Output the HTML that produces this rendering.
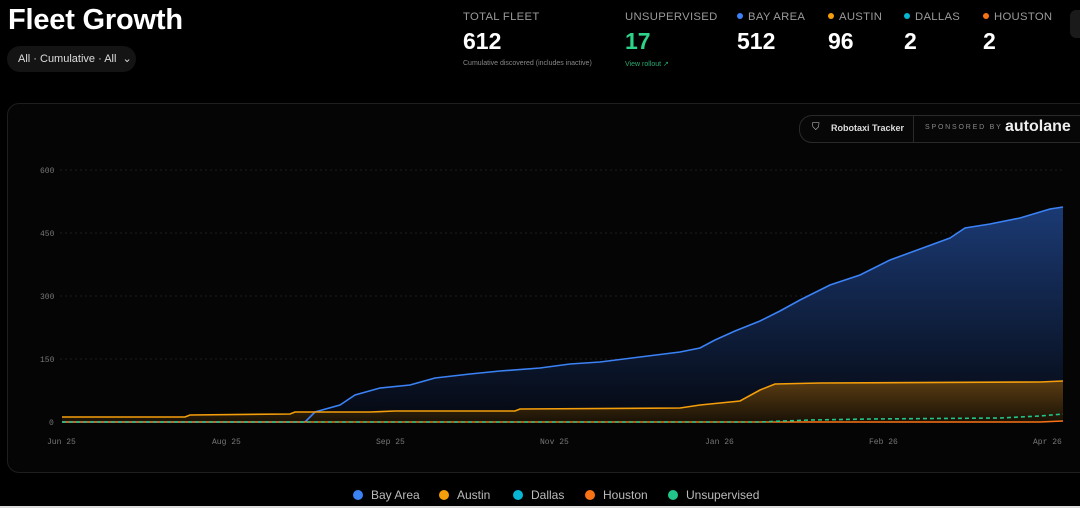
<!DOCTYPE html>
<html><head><meta charset="utf-8"><style>
body{margin:0;width:1080px;height:508px;background:#000;color:#fff;font-family:"Liberation Sans",sans-serif;overflow:hidden;position:relative}
.t{position:absolute;left:8px;top:4px;font-size:29px;font-weight:bold;letter-spacing:-0.2px}
.pill{position:absolute;left:7px;top:46px;width:129px;height:26px;border-radius:13px;background:#141414;font-size:11px;color:#ddd;line-height:26px;padding-left:11px;box-sizing:border-box}
.st{position:absolute;top:11px;font-size:11.3px;color:#9a9a9a;letter-spacing:0.3px}
.sv{position:absolute;top:28px;font-size:23px;font-weight:bold}
.dot{display:inline-block;width:6px;height:6px;border-radius:3px;margin-right:5px;vertical-align:1px}
.card{position:absolute;left:7px;top:103px;width:1090px;height:368px;border:1px solid #1e1e1e;border-radius:12px;background:#050505}
.lg{position:absolute;top:488px;font-size:12px;color:#bbb}
.lg i{display:inline-block;width:10px;height:10px;border-radius:5px;margin-right:8px;vertical-align:-1px}
</style></head><body>
<div class="t">Fleet Growth</div>
<div class="pill">All · Cumulative · All &nbsp;⌄</div>
<div class="st" style="left:463px">TOTAL FLEET</div>
<div class="sv" style="left:463px">612</div>
<div style="position:absolute;left:463px;top:60px;font-size:7px;color:#888">Cumulative discovered (includes inactive)</div>
<div class="st" style="left:625px">UNSUPERVISED</div>
<div class="sv" style="left:625px;color:#2ed38a">17</div>
<div style="position:absolute;left:625px;top:60px;font-size:7px;color:#2aa870">View rollout ↗</div>
<div class="st" style="left:737px"><span class="dot" style="background:#3b82f6"></span>BAY AREA</div>
<div class="sv" style="left:737px">512</div>
<div class="st" style="left:828px"><span class="dot" style="background:#f59e0b"></span>AUSTIN</div>
<div class="sv" style="left:828px">96</div>
<div class="st" style="left:904px"><span class="dot" style="background:#06b6d4"></span>DALLAS</div>
<div class="sv" style="left:904px">2</div>
<div class="st" style="left:983px"><span class="dot" style="background:#f97316"></span>HOUSTON</div>
<div class="sv" style="left:983px">2</div>
<div style="position:absolute;left:1070px;top:10px;width:20px;height:28px;border-radius:6px;background:#1a1a1a"></div>
<div class="card"></div>
<div style="position:absolute;left:799px;top:115px;width:300px;height:26px;border:1px solid #2a2a2a;border-radius:13px;background:#070707"></div>
<div style="position:absolute;left:913px;top:116px;width:1px;height:26px;background:#2a2a2a"></div>
<div style="position:absolute;left:812px;top:122px;font-size:10px;color:#ccc">⛉</div>
<div style="position:absolute;left:831px;top:123px;font-size:9px;color:#ddd;font-weight:bold">Robotaxi Tracker</div>
<div style="position:absolute;left:925px;top:124px;font-size:7px;color:#888;letter-spacing:1.8px">SPONSORED BY</div>
<div style="position:absolute;left:1005px;top:118px;font-size:16px;color:#eee;font-weight:bold">autolane</div>
<svg width="1080" height="508" style="position:absolute;left:0;top:0" font-family="Liberation Mono,monospace" font-size="8" fill="#777">
<defs>
<linearGradient id="b" x1="0" y1="0" x2="0" y2="1"><stop offset="0" stop-color="#1b3a74"/><stop offset="1" stop-color="#050810"/></linearGradient>
<linearGradient id="a" x1="0" y1="0" x2="0" y2="1"><stop offset="0" stop-color="#5a3c12"/><stop offset="1" stop-color="#1a1206"/></linearGradient>
</defs>
<g stroke="#1d1d1d" stroke-dasharray="2 3"><line x1="60" x2="1065" y1="170" y2="170"/><line x1="60" x2="1065" y1="233" y2="233"/><line x1="60" x2="1065" y1="296" y2="296"/><line x1="60" x2="1065" y1="359" y2="359"/></g>
<text x="40" y="173">600</text><text x="40" y="236">450</text><text x="40" y="299">300</text><text x="40" y="362">150</text><text x="49" y="425">0</text>
<text x="47" y="444">Jun 25</text><text x="212" y="444">Aug 25</text><text x="376" y="444">Sep 25</text><text x="540" y="444">Nov 25</text><text x="705" y="444">Jan 26</text><text x="869" y="444">Feb 26</text><text x="1033" y="444">Apr 26</text>
<path d="M305,422 L315,412 L340,405 L355,395 L380,388 L410,385 L435,378 L470,374 L500,371 L540,368 L570,364 L600,362 L640,357 L680,352 L700,348 L715,340 L735,331 L760,321 L780,311 L800,300 L830,285 L860,275 L890,260 L920,249 L950,238 L965,228 L990,224 L1020,218 L1050,209 L1063,207 L1063,422 Z" fill="url(#b)"/>
<path d="M62,417 L185,417 L190,415 L290,414 L295,412 L370,412 L395,411 L515,411 L520,409 L680,408 L700,405 L740,401 L760,390 L775,384 L820,383 L1040,382 L1063,381 L1063,422 L62,422 Z" fill="url(#a)"/>
<path d="M305,422 L315,412 L340,405 L355,395 L380,388 L410,385 L435,378 L470,374 L500,371 L540,368 L570,364 L600,362 L640,357 L680,352 L700,348 L715,340 L735,331 L760,321 L780,311 L800,300 L830,285 L860,275 L890,260 L920,249 L950,238 L965,228 L990,224 L1020,218 L1050,209 L1063,207" fill="none" stroke="#3b82f6" stroke-width="1.6"/>
<path d="M62,417 L185,417 L190,415 L290,414 L295,412 L370,412 L395,411 L515,411 L520,409 L680,408 L700,405 L740,401 L760,390 L775,384 L820,383 L1040,382 L1063,381" fill="none" stroke="#f59e0b" stroke-width="1.6"/>
<line x1="62" x2="305" y1="422" y2="422" stroke="#3b82f6" stroke-width="1.5"/>
<path d="M62,422 L1040,422 L1063,421" stroke="#f97316" stroke-width="1.5" fill="none"/>
<path d="M62,422 L760,422 L810,420 L870,419 L1000,418 L1040,416 L1063,414" stroke="#22c58a" stroke-width="1.6" fill="none" stroke-dasharray="4 3"/>
</svg>
<div class="lg" style="left:353px"><i style="background:#3b82f6"></i>Bay Area</div>
<div class="lg" style="left:439px"><i style="background:#f59e0b"></i>Austin</div>
<div class="lg" style="left:513px"><i style="background:#06b6d4"></i>Dallas</div>
<div class="lg" style="left:585px"><i style="background:#f97316"></i>Houston</div>
<div class="lg" style="left:668px"><i style="background:#22c58a"></i>Unsupervised</div>
<div style="position:absolute;left:0;top:506px;width:1080px;height:2px;background:#ddd"></div>
</body></html>
